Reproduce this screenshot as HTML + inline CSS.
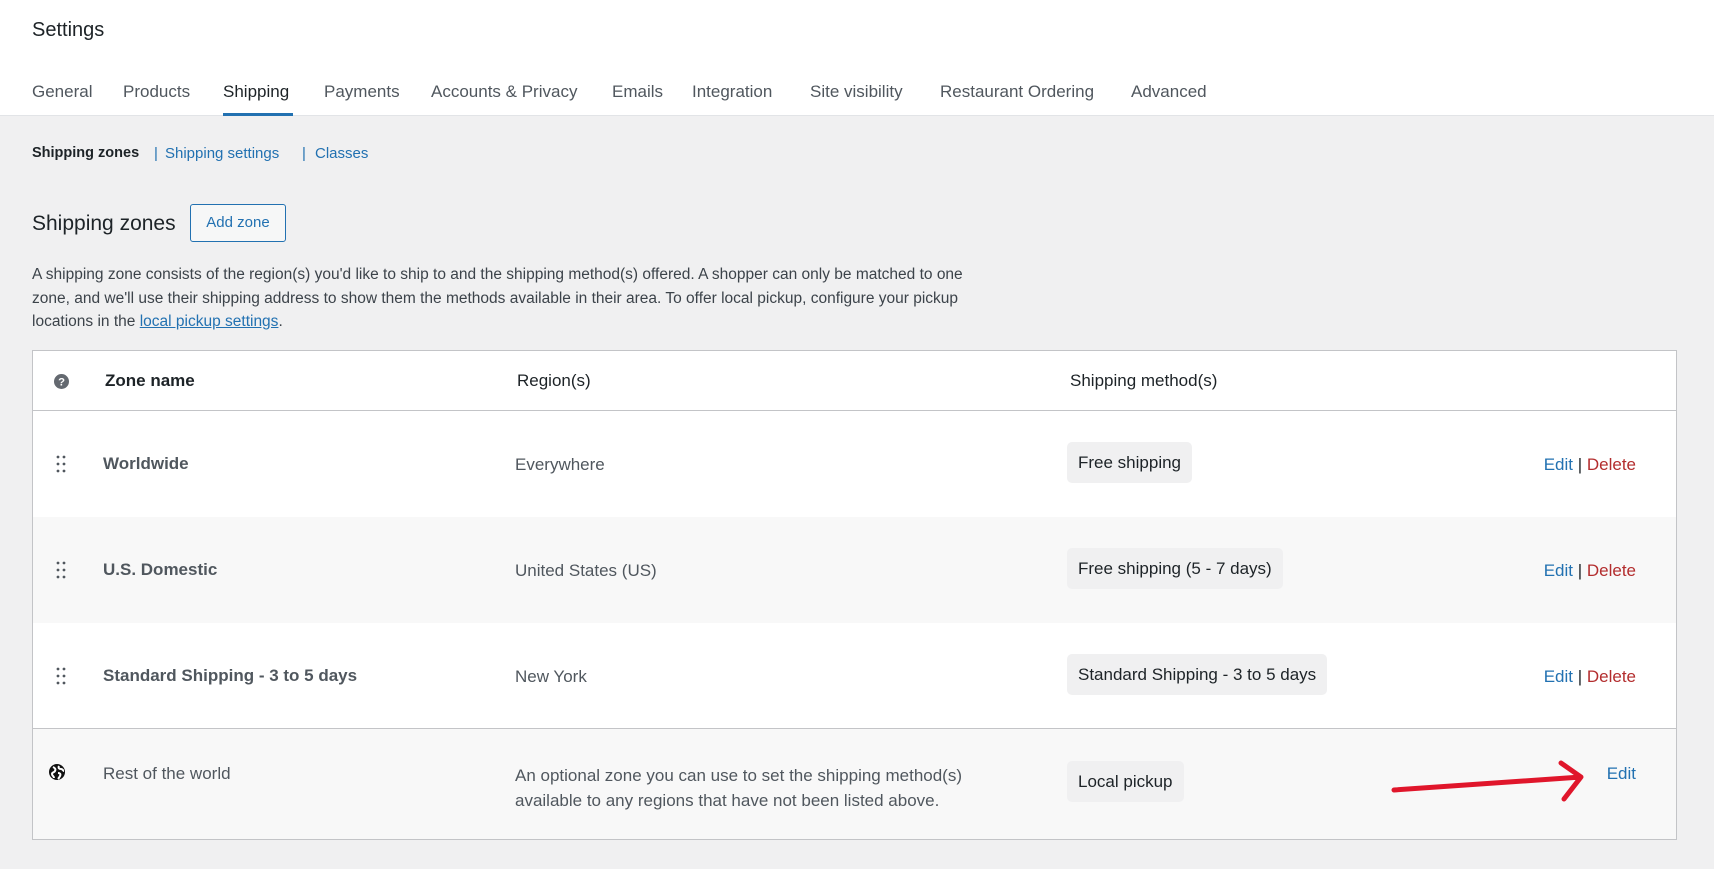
<!DOCTYPE html>
<html><head><style>
*{margin:0;padding:0;box-sizing:border-box}
body{width:1714px;height:869px;background:#f0f0f1;font-family:"Liberation Sans",sans-serif;color:#1d2327;position:relative;overflow:hidden}
.hdr{position:absolute;left:0;top:0;width:1714px;height:116px;background:#fff;border-bottom:1px solid #e2e4e7}
.abs{position:absolute;white-space:nowrap}
.tab{position:absolute;top:82px;font-size:17px;color:#50575e}
.sub{font-size:15px;top:145px}
a{color:#2271b1}
.table{position:absolute;left:32px;top:350px;width:1645px;height:490px;border:1px solid #c3c4c7;background:#fff}
.row{position:absolute;left:0;width:100%}
.name{position:absolute;left:70px;font-size:17px;font-weight:bold;color:#50575e}
.reg{position:absolute;left:482px;font-size:17px;color:#50575e}
.pill{position:absolute;left:1034px;background:#f0f0f1;border-radius:5px;height:41px;line-height:41px;padding:0 11px;font-size:17px;color:#1d2327}
.act{position:absolute;right:40px;font-size:17px;color:#1d2327}
.act .e{color:#2271b1}.act .d{color:#b32d2e}
.drag{position:absolute;left:23px;width:10px;height:18px}
</style></head><body>
<div class="hdr"></div>
<div class="abs" style="left:32px;top:19px;font-size:20px;color:#1d2327">Settings</div>
<div class="tab" style="left:32px">General</div>
<div class="tab" style="left:123px">Products</div>
<div class="tab" style="left:223px;color:#1d2327">Shipping</div>
<div class="abs" style="left:223px;top:113px;width:70px;height:3px;background:#2271b1"></div>
<div class="tab" style="left:324px">Payments</div>
<div class="tab" style="left:431px">Accounts &amp; Privacy</div>
<div class="tab" style="left:612px">Emails</div>
<div class="tab" style="left:692px">Integration</div>
<div class="tab" style="left:810px">Site visibility</div>
<div class="tab" style="left:940px">Restaurant Ordering</div>
<div class="tab" style="left:1131px">Advanced</div>

<div class="abs sub" style="left:32px;font-weight:bold;font-size:14.5px">Shipping zones</div>
<div class="abs sub" style="left:154px;color:#2271b1">|</div>
<div class="abs sub" style="left:165px;color:#2271b1">Shipping settings</div>
<div class="abs sub" style="left:302px;color:#2271b1">|</div>
<div class="abs sub" style="left:315px;color:#2271b1">Classes</div>

<div class="abs" style="left:32px;top:212px;font-size:21px">Shipping zones</div>
<div class="abs" style="left:190px;top:204px;width:96px;height:38px;border:1px solid #2271b1;border-radius:3px;background:#f6f7f7;color:#2271b1;font-size:15px;text-align:center;line-height:36px">Add zone</div>
<div class="abs" style="left:32px;top:263px;font-size:15.5px;line-height:23.5px;color:#3c434a">A shipping zone consists of the region(s) you'd like to ship to and the shipping method(s) offered. A shopper can only be matched to one<br>zone, and we'll use their shipping address to show them the methods available in their area. To offer local pickup, configure your pickup<br>locations in the <a style="text-decoration:underline">local pickup settings</a>.</div>

<div class="table">
 <div class="row" style="top:0;height:60px;border-bottom:1px solid #c3c4c7">
  <svg class="abs" style="left:21px;top:23px" width="15" height="15" viewBox="0 0 16 16"><circle cx="8" cy="8" r="8" fill="#646970"/><text x="8" y="12.5" font-size="12" font-weight="bold" fill="#fff" text-anchor="middle" font-family="Liberation Sans">?</text></svg>
  <div class="abs" style="left:72px;top:20px;font-size:17px;font-weight:bold;color:#1d2327">Zone name</div>
  <div class="abs" style="left:484px;top:20px;font-size:17px;color:#1d2327">Region(s)</div>
  <div class="abs" style="left:1037px;top:20px;font-size:17px;color:#1d2327">Shipping method(s)</div>
 </div>
 <div class="row" style="top:60px;height:106px;background:#fff">
  <svg class="drag" style="top:44px" viewBox="0 0 10 18"><g fill="#50575e"><circle cx="2" cy="2" r="1.4"/><circle cx="8" cy="2" r="1.4"/><circle cx="2" cy="9" r="1.4"/><circle cx="8" cy="9" r="1.4"/><circle cx="2" cy="16" r="1.4"/><circle cx="8" cy="16" r="1.4"/></g></svg>
  <div class="name" style="top:43px">Worldwide</div>
  <div class="reg" style="top:44px">Everywhere</div>
  <div class="pill" style="top:31px">Free shipping</div>
  <div class="act" style="top:44px"><span class="e">Edit</span> | <span class="d">Delete</span></div>
 </div>
 <div class="row" style="top:166px;height:106px;background:#f8f8f8">
  <svg class="drag" style="top:44px" viewBox="0 0 10 18"><g fill="#50575e"><circle cx="2" cy="2" r="1.4"/><circle cx="8" cy="2" r="1.4"/><circle cx="2" cy="9" r="1.4"/><circle cx="8" cy="9" r="1.4"/><circle cx="2" cy="16" r="1.4"/><circle cx="8" cy="16" r="1.4"/></g></svg>
  <div class="name" style="top:43px">U.S. Domestic</div>
  <div class="reg" style="top:44px">United States (US)</div>
  <div class="pill" style="top:31px">Free shipping (5 - 7 days)</div>
  <div class="act" style="top:44px"><span class="e">Edit</span> | <span class="d">Delete</span></div>
 </div>
 <div class="row" style="top:272px;height:106px;background:#fff;border-bottom:1px solid #c3c4c7">
  <svg class="drag" style="top:44px" viewBox="0 0 10 18"><g fill="#50575e"><circle cx="2" cy="2" r="1.4"/><circle cx="8" cy="2" r="1.4"/><circle cx="2" cy="9" r="1.4"/><circle cx="8" cy="9" r="1.4"/><circle cx="2" cy="16" r="1.4"/><circle cx="8" cy="16" r="1.4"/></g></svg>
  <div class="name" style="top:43px">Standard Shipping - 3 to 5 days</div>
  <div class="reg" style="top:44px">New York</div>
  <div class="pill" style="top:31px">Standard Shipping - 3 to 5 days</div>
  <div class="act" style="top:44px"><span class="e">Edit</span> | <span class="d">Delete</span></div>
 </div>
 <div class="row" style="top:378px;height:110px;background:#f8f8f8">
  <svg class="abs" style="left:16px;top:35px" width="16" height="16" viewBox="0 0 16 16"><circle cx="8" cy="8" r="8" fill="#111"/><path d="M4 3c2 1 3 2 2 4s-3 1-3 3 2 2 2 4M10 2c-1 2 0 3 2 3s2 2 3 2M9 9c2 0 3 1 2 3s-1 2-2 3" stroke="#fff" stroke-width="2" fill="none"/></svg>
  <div class="abs" style="left:70px;top:35px;font-size:17px;color:#50575e">Rest of the world</div>
  <div class="abs" style="left:482px;top:34px;font-size:17px;color:#50575e;line-height:25px">An optional zone you can use to set the shipping method(s)<br>available to any regions that have not been listed above.</div>
  <div class="pill" style="top:32px">Local pickup</div>
  <div class="act" style="top:35px;right:40px"><span class="e">Edit</span></div>
 </div>
</div>
<svg class="abs" style="left:0;top:0" width="1714" height="869"><path d="M1394 790 L1581 777 M1561 763 L1581 777 L1564 799" stroke="#e0162b" stroke-width="5" fill="none" stroke-linecap="round" stroke-linejoin="round"/></svg>
</body></html>
